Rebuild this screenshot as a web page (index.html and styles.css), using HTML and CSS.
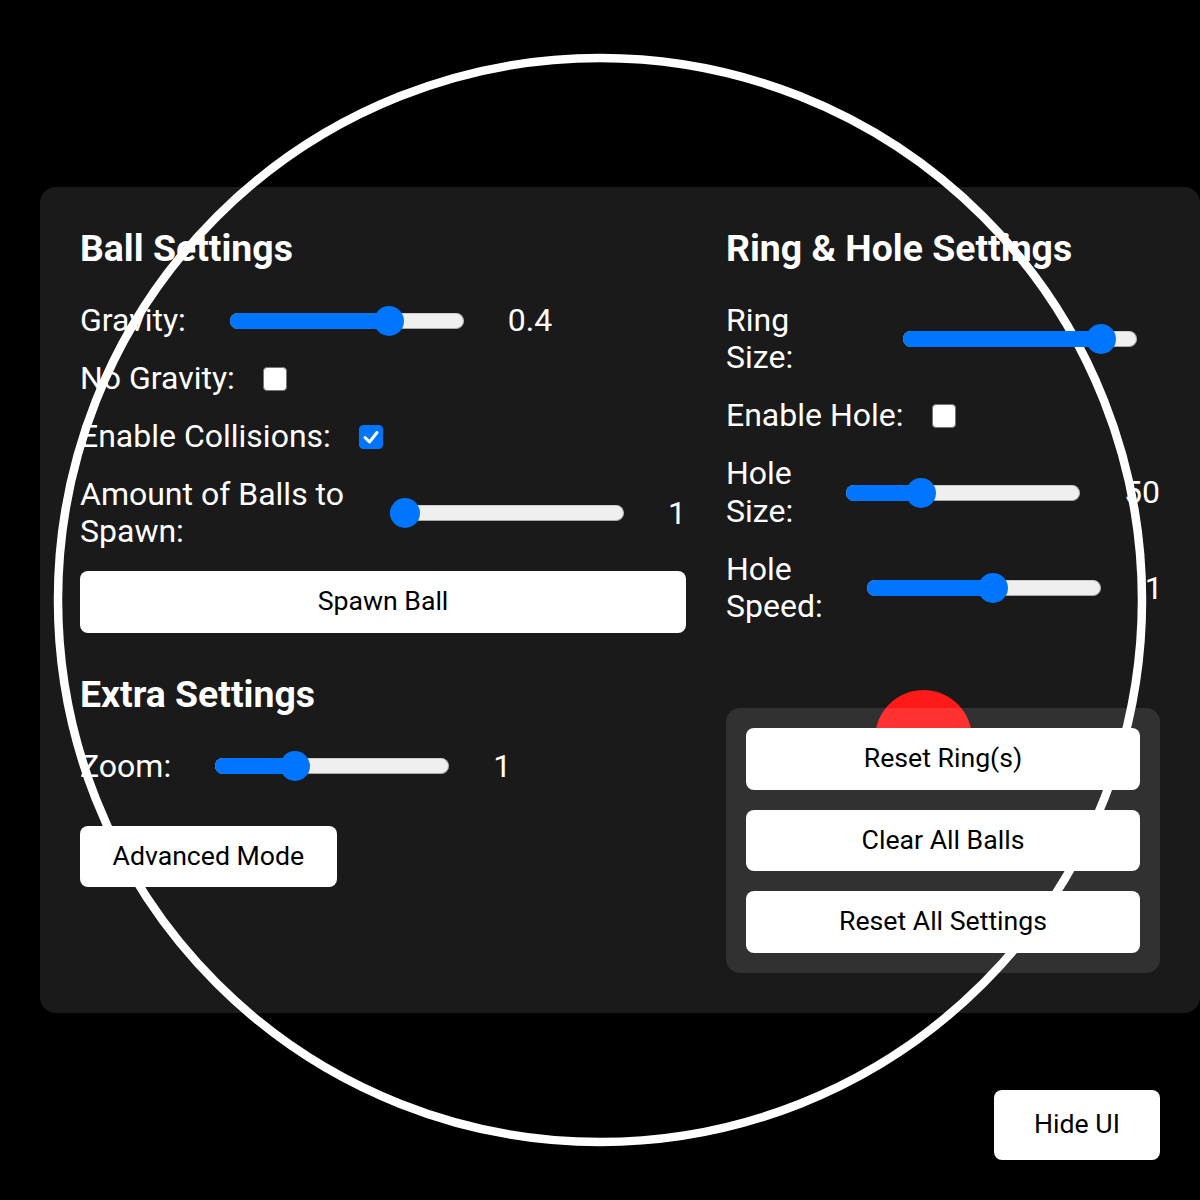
FILE: index.html
```html
<!DOCTYPE html>
<html>
<head>
<title>Ring Balls</title>
<meta name="viewport" content="width=device-width, initial-scale=1.0">
<link rel="stylesheet" href="styles.css">
</head>
<body>
    <!-- canvas: ring + ball -->
    <svg class="scene" width="1200" height="1200" viewBox="0 0 1200 1200">
        <circle cx="600" cy="600" r="542" fill="none" stroke="#ffffff" stroke-width="8.5"/>
        <circle cx="923.5" cy="738.5" r="48.5" fill="#ff0000"/>
    </svg>

    <div class="panel">
        <div class="col">
            <h3 class="section-title">Ball Settings</h3>

            <div class="row">
                <label>Gravity:</label>
                <div class="slider" style="--p: 0.706"><div class="fill"></div><div class="thumb"></div></div>
                <span class="value">0.4</span>
            </div>

            <div class="row">
                <label>No Gravity:</label>
                <span class="check"></span>
            </div>

            <div class="row">
                <label>Enable Collisions:</label>
                <span class="check checked">
                    <svg width="20" height="20" viewBox="0 0 20 20"><polyline points="4,10.5 8.5,15 16,5.5" fill="none" stroke="#fff" stroke-width="3" stroke-linecap="round" stroke-linejoin="round"/></svg>
                </span>
            </div>

            <div class="row">
                <label>Amount of Balls to Spawn:</label>
                <div class="slider" style="--p: 0"><div class="fill"></div><div class="thumb"></div></div>
                <span class="value">1</span>
            </div>

            <button class="btn btn-wide">Spawn Ball</button>

            <h3 class="section-title extra">Extra Settings</h3>

            <div class="row">
                <label>Zoom:</label>
                <div class="slider" style="--p: 0.32"><div class="fill"></div><div class="thumb"></div></div>
                <span class="value">1</span>
            </div>

            <button class="btn btn-mode">Advanced Mode</button>
        </div>

        <div class="col">
            <h3 class="section-title">Ring &amp; Hole Settings</h3>

            <div class="row">
                <label class="ring-label">Ring Size:</label>
                <div class="slider" style="--p: 0.897"><div class="fill"></div><div class="thumb"></div></div>
                <span class="value"></span>
            </div>

            <div class="row">
                <label>Enable Hole:</label>
                <span class="check"></span>
            </div>

            <div class="row">
                <label>Hole Size:</label>
                <div class="slider" style="--p: 0.294"><div class="fill"></div><div class="thumb"></div></div>
                <span class="value">50</span>
            </div>

            <div class="row">
                <label>Hole Speed:</label>
                <div class="slider" style="--p: 0.544"><div class="fill"></div><div class="thumb"></div></div>
                <span class="value">1</span>
            </div>

            <div class="actions">
                <button class="btn">Reset Ring(s)</button>
                <button class="btn">Clear All Balls</button>
                <button class="btn">Reset All Settings</button>
            </div>
        </div>
    </div>

    <button class="btn btn-hide">Hide UI</button>
</body>
</html>
```

FILE: styles.css
```css
/* page */
body {
    margin: 0;
    width: 1200px;
    height: 1200px;
    overflow: hidden;
    background-color: #000000;
    color: #ffffff;
    font-family: Roboto, "Liberation Sans", sans-serif;
    font-size: 32px;
}

/* the ring canvas sits behind everything */
.scene {
    position: absolute;
    top: 0;
    left: 0;
}

.panel {
    position: absolute;
    top: 187px;
    left: 40px;
    width: 1160px;
    box-sizing: border-box;
    padding: 40px;
    background-color: rgba(255, 255, 255, 0.1);
    border-radius: 16px;
    display: grid;
    grid-template-columns: 606px 434px;
    column-gap: 40px;
}

.col {
    display: flex;
    flex-direction: column;
    align-items: flex-start;
}

.section-title {
    font-size: 37.4px;
    font-weight: 700;
    line-height: 43.8px;
    margin: 0 0 31px 0;
}

.section-title.extra {
    margin-top: 40px;
}

/* one setting per row */
.row {
    display: flex;
    align-items: center;
    gap: 25px;
    width: 100%;
    line-height: 37.5px;
    margin-bottom: 20.5px;
}

.row label {
    flex: 0 1 auto;
}

.ring-label {
    flex: none !important;
    width: 133px;
}

.value {
    flex: none;
}

/* range slider */
.slider {
    position: relative;
    flex: none;
    width: 234px;
    height: 16px;
    margin: 0 19px;
    box-sizing: border-box;
    background-color: #efefef;
    border: 1px solid #cdcdcd;
    border-bottom-color: #a8a8a8;
    border-right-color: #b4b4b4;
    border-radius: 8px;
}

.slider .fill {
    position: absolute;
    top: -1px;
    bottom: -1px;
    left: -1px;
    width: calc(15px + (100% - 28px) * var(--p));
    background-color: #0075ff;
    border-radius: 8px;
}

.slider .thumb {
    position: absolute;
    top: -8px;
    left: calc(-1px + (100% - 28px) * var(--p));
    width: 30px;
    height: 30px;
    border-radius: 50%;
    background-color: #0075ff;
}

/* checkbox */
.check {
    flex: none;
    width: 24px;
    height: 24px;
    margin: 3px 3px 3px 3px;
    box-sizing: border-box;
    background-color: #ffffff;
    border: 1.5px solid #767676;
    border-radius: 4px;
    display: flex;
    align-items: center;
    justify-content: center;
}

.check.checked {
    background-color: #0075ff;
    border-color: #0075ff;
}

/* buttons */
.btn {
    font-family: Roboto, "Liberation Sans", sans-serif;
    font-size: 26.67px;
    line-height: 31.5px;
    color: #000000;
    background-color: #ffffff;
    border: none;
    border-radius: 8px;
    padding: 15px 32px;
    box-sizing: border-box;
    height: 61.5px;
    white-space: nowrap;
    cursor: pointer;
}

.btn-wide {
    width: 100%;
}

.btn-mode {
    margin-top: 20px;
    padding: 15px 32.5px;
}

.actions {
    margin-top: 62px;
    width: 100%;
    box-sizing: border-box;
    padding: 20px;
    background-color: rgba(255, 255, 255, 0.1);
    border-radius: 14px;
    display: flex;
    flex-direction: column;
    gap: 20px;
}

.actions .btn {
    width: 100%;
}

.btn-hide {
    position: fixed;
    right: 40px;
    bottom: 40px;
    height: 70px;
    width: 166px;
    padding: 19px 20px;
}
```
